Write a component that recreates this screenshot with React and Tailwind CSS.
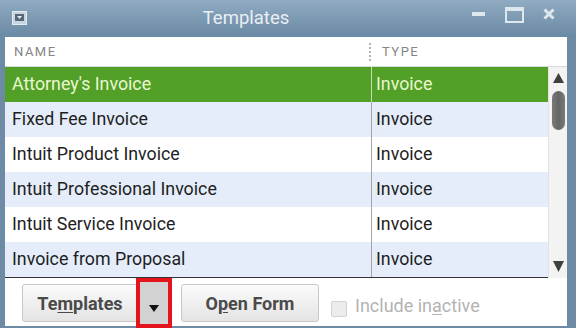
import React from "react";

const rows = [
  { name: "Attorney's Invoice", type: "Invoice" },
  { name: "Fixed Fee Invoice", type: "Invoice" },
  { name: "Intuit Product Invoice", type: "Invoice" },
  { name: "Intuit Professional Invoice", type: "Invoice" },
  { name: "Intuit Service Invoice", type: "Invoice" },
  { name: "Invoice from Proposal", type: "Invoice" },
];

const WindowMenuIcon = () => (
  <svg width="15" height="14" viewBox="0 0 15 14">
    <rect x="0.5" y="0.5" width="14" height="13" fill="#c9d5df" stroke="#e4ebf1" />
    <rect x="3" y="3" width="9" height="7" fill="#56687a" />
    <path d="M5 5 L10 5 L7.5 8 Z" fill="#e8eef3" />
  </svg>
);

const TitleControls = () => (
  <div className="flex items-center h-full">
    {/* minimize */}
    <div className="ml-[7px] w-[13px] h-[4px] bg-[#dfe7ee] mt-[-10px]" />
    {/* maximize */}
    <div className="ml-[20px] w-[19px] h-[16px] border-2 border-t-[4px] border-[#dfe7ee] mt-[-8px]" />
    {/* close */}
    <svg className="ml-[19px] mt-[-10px]" width="12" height="12" viewBox="0 0 12 12">
      <path d="M1.5 1.5 L10.5 10.5 M10.5 1.5 L1.5 10.5" stroke="#dfe7ee" strokeWidth="3" />
    </svg>
    <div className="w-[21px]" />
  </div>
);

const ScrollBar = () => (
  <div className="w-[19px] bg-[#f3f3f3] border-l border-[#e3e3e3] flex flex-col items-center">
    <svg className="mt-[6px]" width="11" height="10" viewBox="0 0 11 10">
      <path d="M5.5 0 L11 10 L0 10 Z" fill="#3f3f3f" />
    </svg>
    <div className="mt-[8px] w-[13px] h-[39px] rounded-full bg-gradient-to-r from-[#7a7a7a] via-[#666] to-[#7a7a7a]" />
    <div className="flex-1" />
    <svg className="mb-[6px]" width="11" height="11" viewBox="0 0 11 11">
      <path d="M0 0 L11 0 L5.5 11 Z" fill="#3f3f3f" />
    </svg>
  </div>
);

export default function App() {
  return (
    <div
      className="relative w-[576px] h-[328px] overflow-hidden bg-[#6d8ba5] flex flex-col"
      style={{ fontFamily: "Roboto, 'Liberation Sans', sans-serif" }}
    >
      {/* title bar */}
      <div className="h-[37px] shrink-0 flex items-center bg-gradient-to-b from-[#90abc2] to-[#6a89a4]">
        <div className="pl-[12px] pb-[2px]">
          <WindowMenuIcon />
        </div>
        <div className="flex-1 text-center text-[18.5px] text-[#e9eef3] leading-none pb-[1px]">
          Templates
        </div>
        <TitleControls />
      </div>

      {/* body */}
      <div className="flex-1 ml-[5px] mr-[9px] mb-[2px] bg-white flex flex-col">
        {/* column header */}
        <div className="h-[30px] shrink-0 flex items-center border-b border-[#d9d9d9] text-[13px] tracking-[1.5px] text-[#858585]">
          <div className="w-[364px] pl-[9px]">NAME</div>
          <div className="h-[18px] border-l-2 border-dotted border-[#b5b5b5]" />
          <div className="pl-[11px]">TYPE</div>
        </div>

        {/* list */}
        <div className="flex shrink-0">
          <div className="w-[543px] flex flex-col border-b border-[#333]">
            {rows.map((row, i) => {
              const selected = i === 0;
              const bg = selected ? "bg-[#52a028] text-[#eaf7cf]" : i % 2 === 1 ? "bg-[#e4edf9] text-[#1e1e1e]" : "bg-white text-[#1e1e1e]";
              return (
                <div key={row.name} className={`flex h-[35px] items-center text-[17.8px] ${bg}`}>
                  <div className="w-[366px] pl-[7px]">{row.name}</div>
                  <div
                    className={`h-full flex items-center pl-[4px] border-l ${selected ? "border-[#c3dfae]" : "border-[#a5a5a5]"}`}
                  >
                    {row.type}
                  </div>
                </div>
              );
            })}
          </div>
          <ScrollBar />
        </div>

        {/* footer */}
        <div className="flex-1 flex items-start pt-[6px] pl-[17px]">
          <div className="flex h-[38px] rounded-[3px] border border-[#c8c8c8] bg-gradient-to-b from-[#fbfbfb] to-[#e4e4e4] text-[18px] font-bold text-[#4a4a4a]">
            <div className="w-[114px] flex items-center justify-center">
              <span>
                Te<span className="underline underline-offset-2">m</span>plates
              </span>
            </div>
            <div className="w-[33px] bg-[#d4d4d4]" />
          </div>
          <div className="ml-[10px] w-[138px] h-[38px] rounded-[3px] border border-[#c8c8c8] bg-gradient-to-b from-[#fbfbfb] to-[#e4e4e4] flex items-center justify-center text-[18px] font-bold text-[#4a4a4a]">
            <span>
              O<span className="underline underline-offset-2">p</span>en Form
            </span>
          </div>
          <div className="ml-[12px] mt-[17px] w-[16px] h-[16px] rounded-[2px] border border-[#d2d2d2] bg-[#ececec]" />
          <div className="ml-[8px] h-[38px] pt-[4px] flex items-center text-[18px] text-[#b3b3b3]">
            <span>
              Include in<span className="underline underline-offset-2">a</span>ctive
            </span>
          </div>
        </div>
      </div>

      {/* red annotation box over the dropdown arrow */}
      <div className="absolute left-[136px] top-[278px] w-[36px] h-[50px] border-4 border-[#e3141b] bg-[#d2d2d2] flex items-start justify-center">
        <svg className="mt-[23px] ml-[-1px]" width="10" height="7" viewBox="0 0 10 7">
          <path d="M0 0 L10 0 L5 7 Z" fill="#111" />
        </svg>
      </div>
    </div>
  );
}
